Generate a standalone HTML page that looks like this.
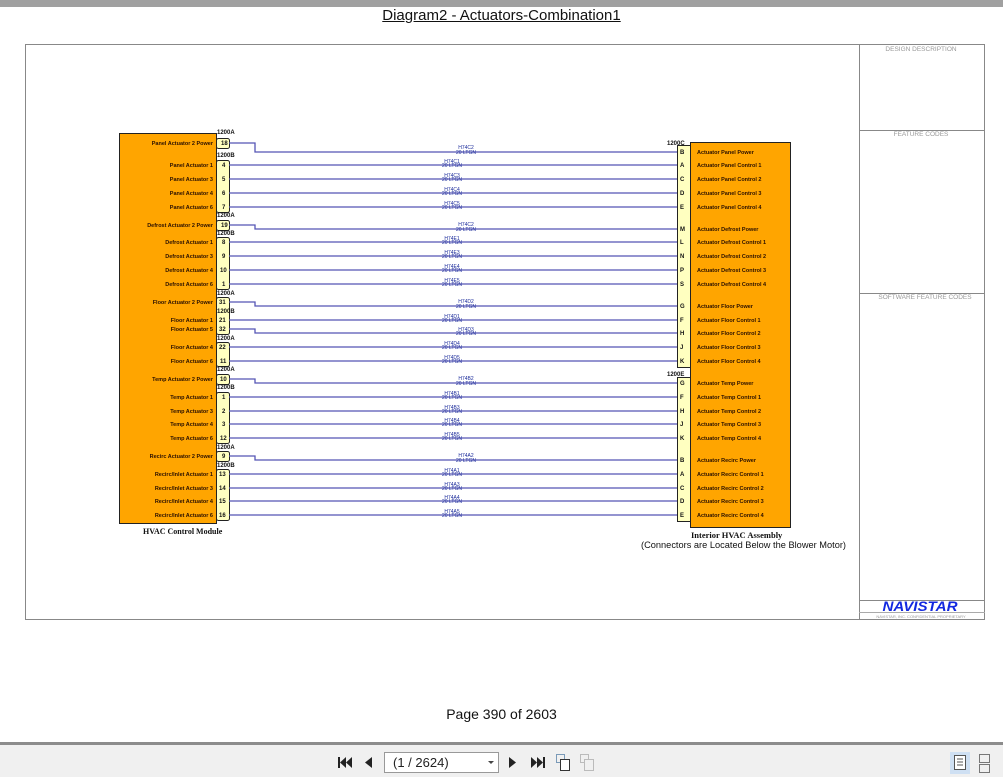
<!DOCTYPE html>
<html><head><meta charset="utf-8"><style>
html,body{margin:0;padding:0;width:1003px;height:777px;overflow:hidden;background:#fff;font-family:"Liberation Sans",sans-serif}
.top{position:absolute;left:0;top:0;width:1003px;height:7px;background:#a0a0a0}
.title{position:absolute;left:0;width:1003px;top:7px;text-align:center;font-size:15px;text-decoration:underline;color:#111}
.page{position:absolute;left:0;width:1003px;top:706px;text-align:center;font-size:14px;color:#111}
.tb{position:absolute;left:0;top:742px;width:1003px;height:35px;background:#f0f0f0;border-top:3px solid #8c8c8c;box-sizing:border-box}
svg text{font-family:"Liberation Sans",sans-serif}
</style></head><body>
<div class="top"></div>
<div class="title">Diagram2 - Actuators-Combination1</div>
<svg width="1003" height="777" style="position:absolute;left:0;top:0">
<rect x="25.5" y="44.5" width="959" height="575" fill="none" stroke="#888"/>
<line x1="859.5" y1="44" x2="859.5" y2="620" stroke="#888"/>
<line x1="859" y1="130.5" x2="985" y2="130.5" stroke="#888"/>
<line x1="859" y1="293.5" x2="985" y2="293.5" stroke="#888"/>
<line x1="859" y1="600.5" x2="985" y2="600.5" stroke="#888"/>
<line x1="859" y1="612.5" x2="985" y2="612.5" stroke="#aaa"/>
<g font-size="6.5" fill="#999" text-anchor="middle">
<text x="921" y="51">DESIGN DESCRIPTION</text>
<text x="921" y="136">FEATURE CODES</text>
<text x="925" y="299">SOFTWARE FEATURE CODES</text>
<text x="921" y="618" font-size="4">NAVISTAR, INC. CONFIDENTIAL PROPRIETARY</text>
</g>
<text x="920" y="611" text-anchor="middle" font-size="14" font-weight="bold" font-style="italic" fill="#1228e0" textLength="75" lengthAdjust="spacingAndGlyphs">NAVISTAR</text>
<rect x="119.5" y="133.5" width="97" height="390" fill="#ffa500" stroke="#222"/>
<rect x="690.5" y="142.5" width="100" height="385" fill="#ffa500" stroke="#222"/>
<g fill="#ffffc0" stroke="#222">
<rect x="216.5" y="138.5" width="13" height="10" rx="2"/>
<rect x="216.5" y="160.5" width="13" height="52" rx="2"/>
<rect x="216.5" y="220.5" width="13" height="10" rx="2"/>
<rect x="216.5" y="237.5" width="13" height="52" rx="2"/>
<rect x="216.5" y="297.5" width="13" height="37" rx="2"/>
<rect x="216.5" y="342.5" width="13" height="24" rx="2"/>
<rect x="216.5" y="374.5" width="13" height="10" rx="2"/>
<rect x="216.5" y="392.5" width="13" height="51" rx="2"/>
<rect x="216.5" y="451.5" width="13" height="10" rx="2"/>
<rect x="216.5" y="469.5" width="13" height="51" rx="2"/>
<rect x="677.5" y="145.5" width="13" height="222"/>
<rect x="677.5" y="377.5" width="13" height="144"/>
</g>
<g font-size="6" font-weight="bold" fill="#111">
<text x="217" y="134">1200A</text><text x="217" y="157">1200B</text>
<text x="217" y="217">1200A</text><text x="217" y="235">1200B</text>
<text x="217" y="295">1200A</text><text x="217" y="313">1200B</text><text x="217" y="340">1200A</text>
<text x="217" y="371">1200A</text><text x="217" y="389">1200B</text>
<text x="217" y="449">1200A</text><text x="217" y="467">1200B</text>
<text x="667" y="145">1200C</text><text x="667" y="376">1200E</text>
</g>
<g stroke="#5555b5" stroke-width="1.3" fill="none">
<path d="M229 143H255V152H677"/><path d="M229 225H255V229H677"/><path d="M229 302H255V306H677"/>
<path d="M229 329H255V333H677"/><path d="M229 379H255V383H677"/><path d="M229 456H255V460H677"/>
<path d="M229 165H677M229 179H677M229 193H677M229 207H677M229 242H677M229 256H677M229 270H677M229 284H677M229 320H677M229 347H677M229 361H677M229 397H677M229 411H677M229 424H677M229 438H677M229 474H677M229 488H677M229 501H677M229 515H677"/>
</g>
<g font-size="5" fill="#1a2a9a" text-anchor="middle">
<text x="466" y="149">H74C2</text><text x="466" y="154">20 LTGN</text>
<text x="452" y="163">H74C1</text><text x="452" y="167">20 LTGN</text>
<text x="452" y="177">H74C3</text><text x="452" y="181">20 LTGN</text>
<text x="452" y="191">H74C4</text><text x="452" y="195">20 LTGN</text>
<text x="452" y="205">H74C5</text><text x="452" y="209">20 LTGN</text>
<text x="466" y="226">H74C2</text><text x="466" y="231">20 LTGN</text>
<text x="452" y="240">H74E1</text><text x="452" y="244">20 LTGN</text>
<text x="452" y="254">H74E3</text><text x="452" y="258">20 LTGN</text>
<text x="452" y="268">H74E4</text><text x="452" y="272">20 LTGN</text>
<text x="452" y="282">H74E5</text><text x="452" y="286">20 LTGN</text>
<text x="466" y="303">H74D2</text><text x="466" y="308">20 LTGN</text>
<text x="452" y="318">H74D1</text><text x="452" y="322">20 LTGN</text>
<text x="466" y="331">H74D3</text><text x="466" y="335">20 LTGN</text>
<text x="452" y="345">H74D4</text><text x="452" y="349">20 LTGN</text>
<text x="452" y="359">H74D5</text><text x="452" y="363">20 LTGN</text>
<text x="466" y="380">H74B2</text><text x="466" y="385">20 LTGN</text>
<text x="452" y="395">H74B1</text><text x="452" y="399">20 LTGN</text>
<text x="452" y="409">H74B3</text><text x="452" y="413">20 LTGN</text>
<text x="452" y="422">H74B4</text><text x="452" y="426">20 LTGN</text>
<text x="452" y="436">H74B5</text><text x="452" y="440">20 LTGN</text>
<text x="466" y="457">H74A2</text><text x="466" y="462">20 LTGN</text>
<text x="452" y="472">H74A1</text><text x="452" y="476">20 LTGN</text>
<text x="452" y="486">H74A3</text><text x="452" y="490">20 LTGN</text>
<text x="452" y="499">H74A4</text><text x="452" y="503">20 LTGN</text>
<text x="452" y="513">H74A5</text><text x="452" y="517">20 LTGN</text>
</g>
<g font-size="5.5" font-weight="bold" fill="#2a1000" text-anchor="end">
<text x="213" y="145">Panel Actuator 2 Power</text><text x="213" y="167">Panel Actuator 1</text>
<text x="213" y="181">Panel Actuator 3</text><text x="213" y="195">Panel Actuator 4</text>
<text x="213" y="209">Panel Actuator 6</text><text x="213" y="227">Defrost Actuator 2 Power</text>
<text x="213" y="244">Defrost Actuator 1</text><text x="213" y="258">Defrost Actuator 3</text>
<text x="213" y="272">Defrost Actuator 4</text><text x="213" y="286">Defrost Actuator 6</text>
<text x="213" y="304">Floor Actuator 2 Power</text><text x="213" y="322">Floor Actuator 1</text>
<text x="213" y="331">Floor Actuator 5</text><text x="213" y="349">Floor Actuator 4</text>
<text x="213" y="363">Floor Actuator 6</text><text x="213" y="381">Temp Actuator 2 Power</text>
<text x="213" y="399">Temp Actuator 1</text><text x="213" y="413">Temp Actuator 3</text>
<text x="213" y="426">Temp Actuator 4</text><text x="213" y="440">Temp Actuator 6</text>
<text x="213" y="458">Recirc Actuator 2 Power</text><text x="213" y="476">Recirc/Inlet Actuator 1</text>
<text x="213" y="490">Recirc/Inlet Actuator 3</text><text x="213" y="503">Recirc/Inlet Actuator 4</text>
<text x="213" y="517">Recirc/Inlet Actuator 6</text>
</g>
<g font-size="6" font-weight="bold" fill="#111">
<text x="221" y="145">18</text><text x="222" y="167">4</text><text x="222" y="181">5</text><text x="222" y="195">6</text><text x="222" y="209">7</text>
<text x="221" y="227">19</text><text x="222" y="244">8</text><text x="222" y="258">9</text><text x="220" y="272">10</text><text x="222" y="286">1</text>
<text x="219" y="304">31</text><text x="219" y="322">21</text><text x="219" y="331">32</text><text x="219" y="349">22</text><text x="220" y="363">11</text>
<text x="220" y="381">10</text><text x="222" y="399">1</text><text x="222" y="413">2</text><text x="222" y="426">3</text><text x="220" y="440">12</text>
<text x="222" y="458">9</text><text x="219" y="476">13</text><text x="219" y="490">14</text><text x="219" y="503">15</text><text x="219" y="517">16</text>
<text x="680" y="154">B</text><text x="680" y="167">A</text><text x="680" y="181">C</text><text x="680" y="195">D</text><text x="680" y="209">E</text>
<text x="680" y="231">M</text><text x="680" y="244">L</text><text x="680" y="258">N</text><text x="680" y="272">P</text><text x="680" y="286">S</text>
<text x="680" y="308">G</text><text x="680" y="322">F</text><text x="680" y="335">H</text><text x="680" y="349">J</text><text x="680" y="363">K</text>
<text x="680" y="385">G</text><text x="680" y="399">F</text><text x="680" y="413">H</text><text x="680" y="426">J</text><text x="680" y="440">K</text>
<text x="680" y="462">B</text><text x="680" y="476">A</text><text x="680" y="490">C</text><text x="680" y="503">D</text><text x="680" y="517">E</text>
</g>
<g font-size="5.5" font-weight="bold" fill="#2a1000">
<text x="697" y="154">Actuator Panel Power</text><text x="697" y="167">Actuator Panel Control 1</text>
<text x="697" y="181">Actuator Panel Control 2</text><text x="697" y="195">Actuator Panel Control 3</text>
<text x="697" y="209">Actuator Panel Control 4</text><text x="697" y="231">Actuator Defrost Power</text>
<text x="697" y="244">Actuator Defrost Control 1</text><text x="697" y="258">Actuator Defrost Control 2</text>
<text x="697" y="272">Actuator Defrost Control 3</text><text x="697" y="286">Actuator Defrost Control 4</text>
<text x="697" y="308">Actuator Floor Power</text><text x="697" y="322">Actuator Floor Control 1</text>
<text x="697" y="335">Actuator Floor Control 2</text><text x="697" y="349">Actuator Floor Control 3</text>
<text x="697" y="363">Actuator Floor Control 4</text><text x="697" y="385">Actuator Temp Power</text>
<text x="697" y="399">Actuator Temp Control 1</text><text x="697" y="413">Actuator Temp Control 2</text>
<text x="697" y="426">Actuator Temp Control 3</text><text x="697" y="440">Actuator Temp Control 4</text>
<text x="697" y="462">Actuator Recirc Power</text><text x="697" y="476">Actuator Recirc Control 1</text>
<text x="697" y="490">Actuator Recirc Control 2</text><text x="697" y="503">Actuator Recirc Control 3</text>
<text x="697" y="517">Actuator Recirc Control 4</text>
</g>
<text x="143" y="534" font-size="8" font-weight="bold" fill="#111" style="font-family:'Liberation Serif',serif">HVAC Control Module</text>
<text x="691" y="538" font-size="8.5" font-weight="bold" fill="#111" style="font-family:'Liberation Serif',serif">Interior HVAC Assembly</text>
<text x="641" y="548" font-size="9" fill="#111" textLength="205" lengthAdjust="spacingAndGlyphs">(Connectors are Located Below the Blower Motor)</text>
</svg>
<div class="page">Page 390 of 2603</div>
<div class="tb">
<svg width="1003" height="32" style="position:absolute;left:0;top:0">
<g fill="#222">
<rect x="338" y="12" width="2" height="11"/><path d="M346 12L340 17.5L346 23Z"/><path d="M352 12L346 17.5L352 23Z"/>
<path d="M372 12L365 17.5L372 23Z"/>
<path d="M509 12L516 17.5L509 23Z"/>
<path d="M531 12L537 17.5L531 23Z"/><path d="M537 12L543 17.5L537 23Z"/><rect x="543" y="12" width="2" height="11"/>
</g>
<rect x="384.5" y="7.5" width="114" height="20" fill="#fff" stroke="#999"/>
<text x="393" y="22" font-size="13" fill="#222">(1 / 2624)</text>
<path d="M488 16L494 16L491 19Z" fill="#444"/>
<rect x="556.5" y="9.5" width="8" height="8" fill="none" stroke="#7a9ab8"/><rect x="560.5" y="14.5" width="9" height="11" fill="#fff" stroke="#333"/>
<rect x="580.5" y="9.5" width="8" height="8" fill="none" stroke="#bbb"/><rect x="584.5" y="14.5" width="9" height="11" fill="#f0f0f0" stroke="#bbb"/>
<rect x="950" y="7" width="20" height="22" fill="#cfe0f3"/>
<rect x="954.5" y="10.5" width="11" height="14" fill="#fff" stroke="#555"/>
<path d="M957 14H963M957 17H963M957 20H963" stroke="#555"/>
<rect x="979.5" y="9.5" width="10" height="8" fill="none" stroke="#777"/><rect x="979.5" y="19.5" width="10" height="8" fill="none" stroke="#777"/>
</svg>
</div>
</body></html>
